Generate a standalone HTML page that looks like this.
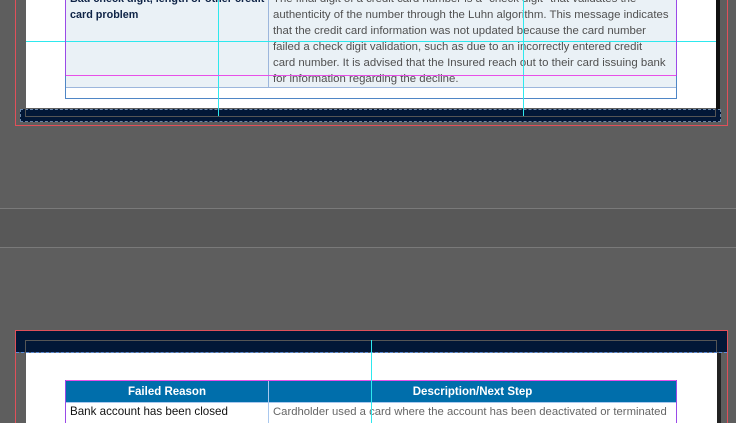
<!DOCTYPE html>
<html><head><meta charset="utf-8"><style>
*{margin:0;padding:0;box-sizing:border-box}
body{width:736px;height:423px;overflow:hidden;background:#5e5e5e;position:relative;font-family:"Liberation Sans",Arial,sans-serif}
.a{position:absolute}
.t{font-size:11.4px;line-height:16px;white-space:nowrap}
</style></head><body>
<div class="a" style="left:0;top:208px;width:736px;height:40px;background:#585858;border-top:1px solid #7a7a7a;border-bottom:1px solid #7a7a7a"></div>

<div class="a" style="left:26px;top:0;width:691px;height:108px;background:#fff"></div>
<div class="a" style="left:716px;top:0;width:4px;height:116px;background:#111"></div>
<div class="a" style="left:20px;top:109px;width:701px;height:13px;background:#021737;border:1px dashed #6a86a8"></div>
<div class="a" style="left:25px;top:109px;width:691px;height:8px;border:1px solid #555;border-top:none;"></div>
<div class="a" style="left:65px;top:0;width:612px;height:99px;border:1px solid #4f86c6;border-top:none;background:#fff"></div>
<div class="a" style="left:66px;top:0;width:610px;height:88px;background:#eaf1f6;border-bottom:1px solid #9cb6dc"></div>
<div class="a" style="left:268px;top:0;width:1px;height:88px;background:#9cb6dc"></div>
<div class="a t" style="left:70px;top:-9px;font-weight:bold;color:#0f2447;font-size:10.8px">Bad check digit, length or other credit<br>card problem</div>
<div class="a t" style="left:273px;top:-9px;color:#505050">The final digit of a credit card number is a "check digit" that validates the<br>authenticity of the number through the Luhn algorithm. This message indicates<br>that the credit card information was not updated because the card number<br>failed a check digit validation, such as due to an incorrectly entered credit<br>card number. It is advised that the Insured reach out to their card issuing bank<br>for information regarding the decline.</div>
<div class="a" style="left:26px;top:41px;width:690px;height:1px;background:#2ee8ee"></div>
<div class="a" style="left:218px;top:0;width:1px;height:116px;background:#2ee8ee"></div>
<div class="a" style="left:523px;top:0;width:1px;height:116px;background:#2ee8ee"></div>
<div class="a" style="left:65px;top:75px;width:612px;height:1px;background:#e84fe8"></div>
<div class="a" style="left:65px;top:0;width:1px;height:76px;background:#9a4ae8"></div>
<div class="a" style="left:676px;top:0;width:1px;height:76px;background:#9a4ae8"></div>
<div class="a" style="left:15px;top:0;width:1px;height:126px;background:#e0505a"></div>
<div class="a" style="left:727px;top:0;width:1px;height:126px;background:#e0505a"></div>
<div class="a" style="left:15px;top:125px;width:713px;height:1px;background:#e0505a"></div>

<div class="a" style="left:16px;top:331px;width:711px;height:21px;background:#021737"></div>
<div class="a" style="left:25px;top:340px;width:692px;height:20px;border:1px solid #555;border-bottom:none"></div>
<div class="a" style="left:26px;top:353px;width:691px;height:70px;background:#fff"></div>
<div class="a" style="left:16px;top:352px;width:711px;height:1px;border-top:1px dashed #5a8ad8"></div>
<div class="a" style="left:717px;top:353px;width:4px;height:70px;background:#222"></div>
<div class="a" style="left:65px;top:380px;width:612px;height:22px;background:#006eab;border-top:1px solid #e84fe8"></div>
<div class="a" style="left:268px;top:381px;width:1px;height:42px;background:#a9c8ee"></div>
<div class="a" style="left:65px;top:402px;width:612px;height:1px;background:#a9c8ee"></div>
<div class="a" style="left:65px;top:380px;width:1px;height:43px;background:#9a4ae8"></div>
<div class="a" style="left:676px;top:380px;width:1px;height:43px;background:#9a4ae8"></div>
<div class="a" style="left:66px;top:384px;width:202px;text-align:center;color:#fff;font-weight:bold;font-size:11.5px;line-height:16px">Failed Reason</div>
<div class="a" style="left:269px;top:384px;width:407px;text-align:center;color:#fff;font-weight:bold;font-size:11.5px;line-height:16px">Description/Next Step</div>
<div class="a t" style="left:70px;top:404px;color:#111;font-size:11.6px">Bank account has been closed</div>
<div class="a t" style="left:273px;top:404px;color:#666;font-size:11.3px">Cardholder used a card where the account has been deactivated or terminated</div>
<div class="a" style="left:371px;top:340px;width:1px;height:83px;background:#2ee8ee"></div>
<div class="a" style="left:15px;top:330px;width:713px;height:1px;background:#e0505a"></div>
<div class="a" style="left:15px;top:330px;width:1px;height:93px;background:#e0505a"></div>
<div class="a" style="left:727px;top:330px;width:1px;height:93px;background:#e0505a"></div>
</body></html>
